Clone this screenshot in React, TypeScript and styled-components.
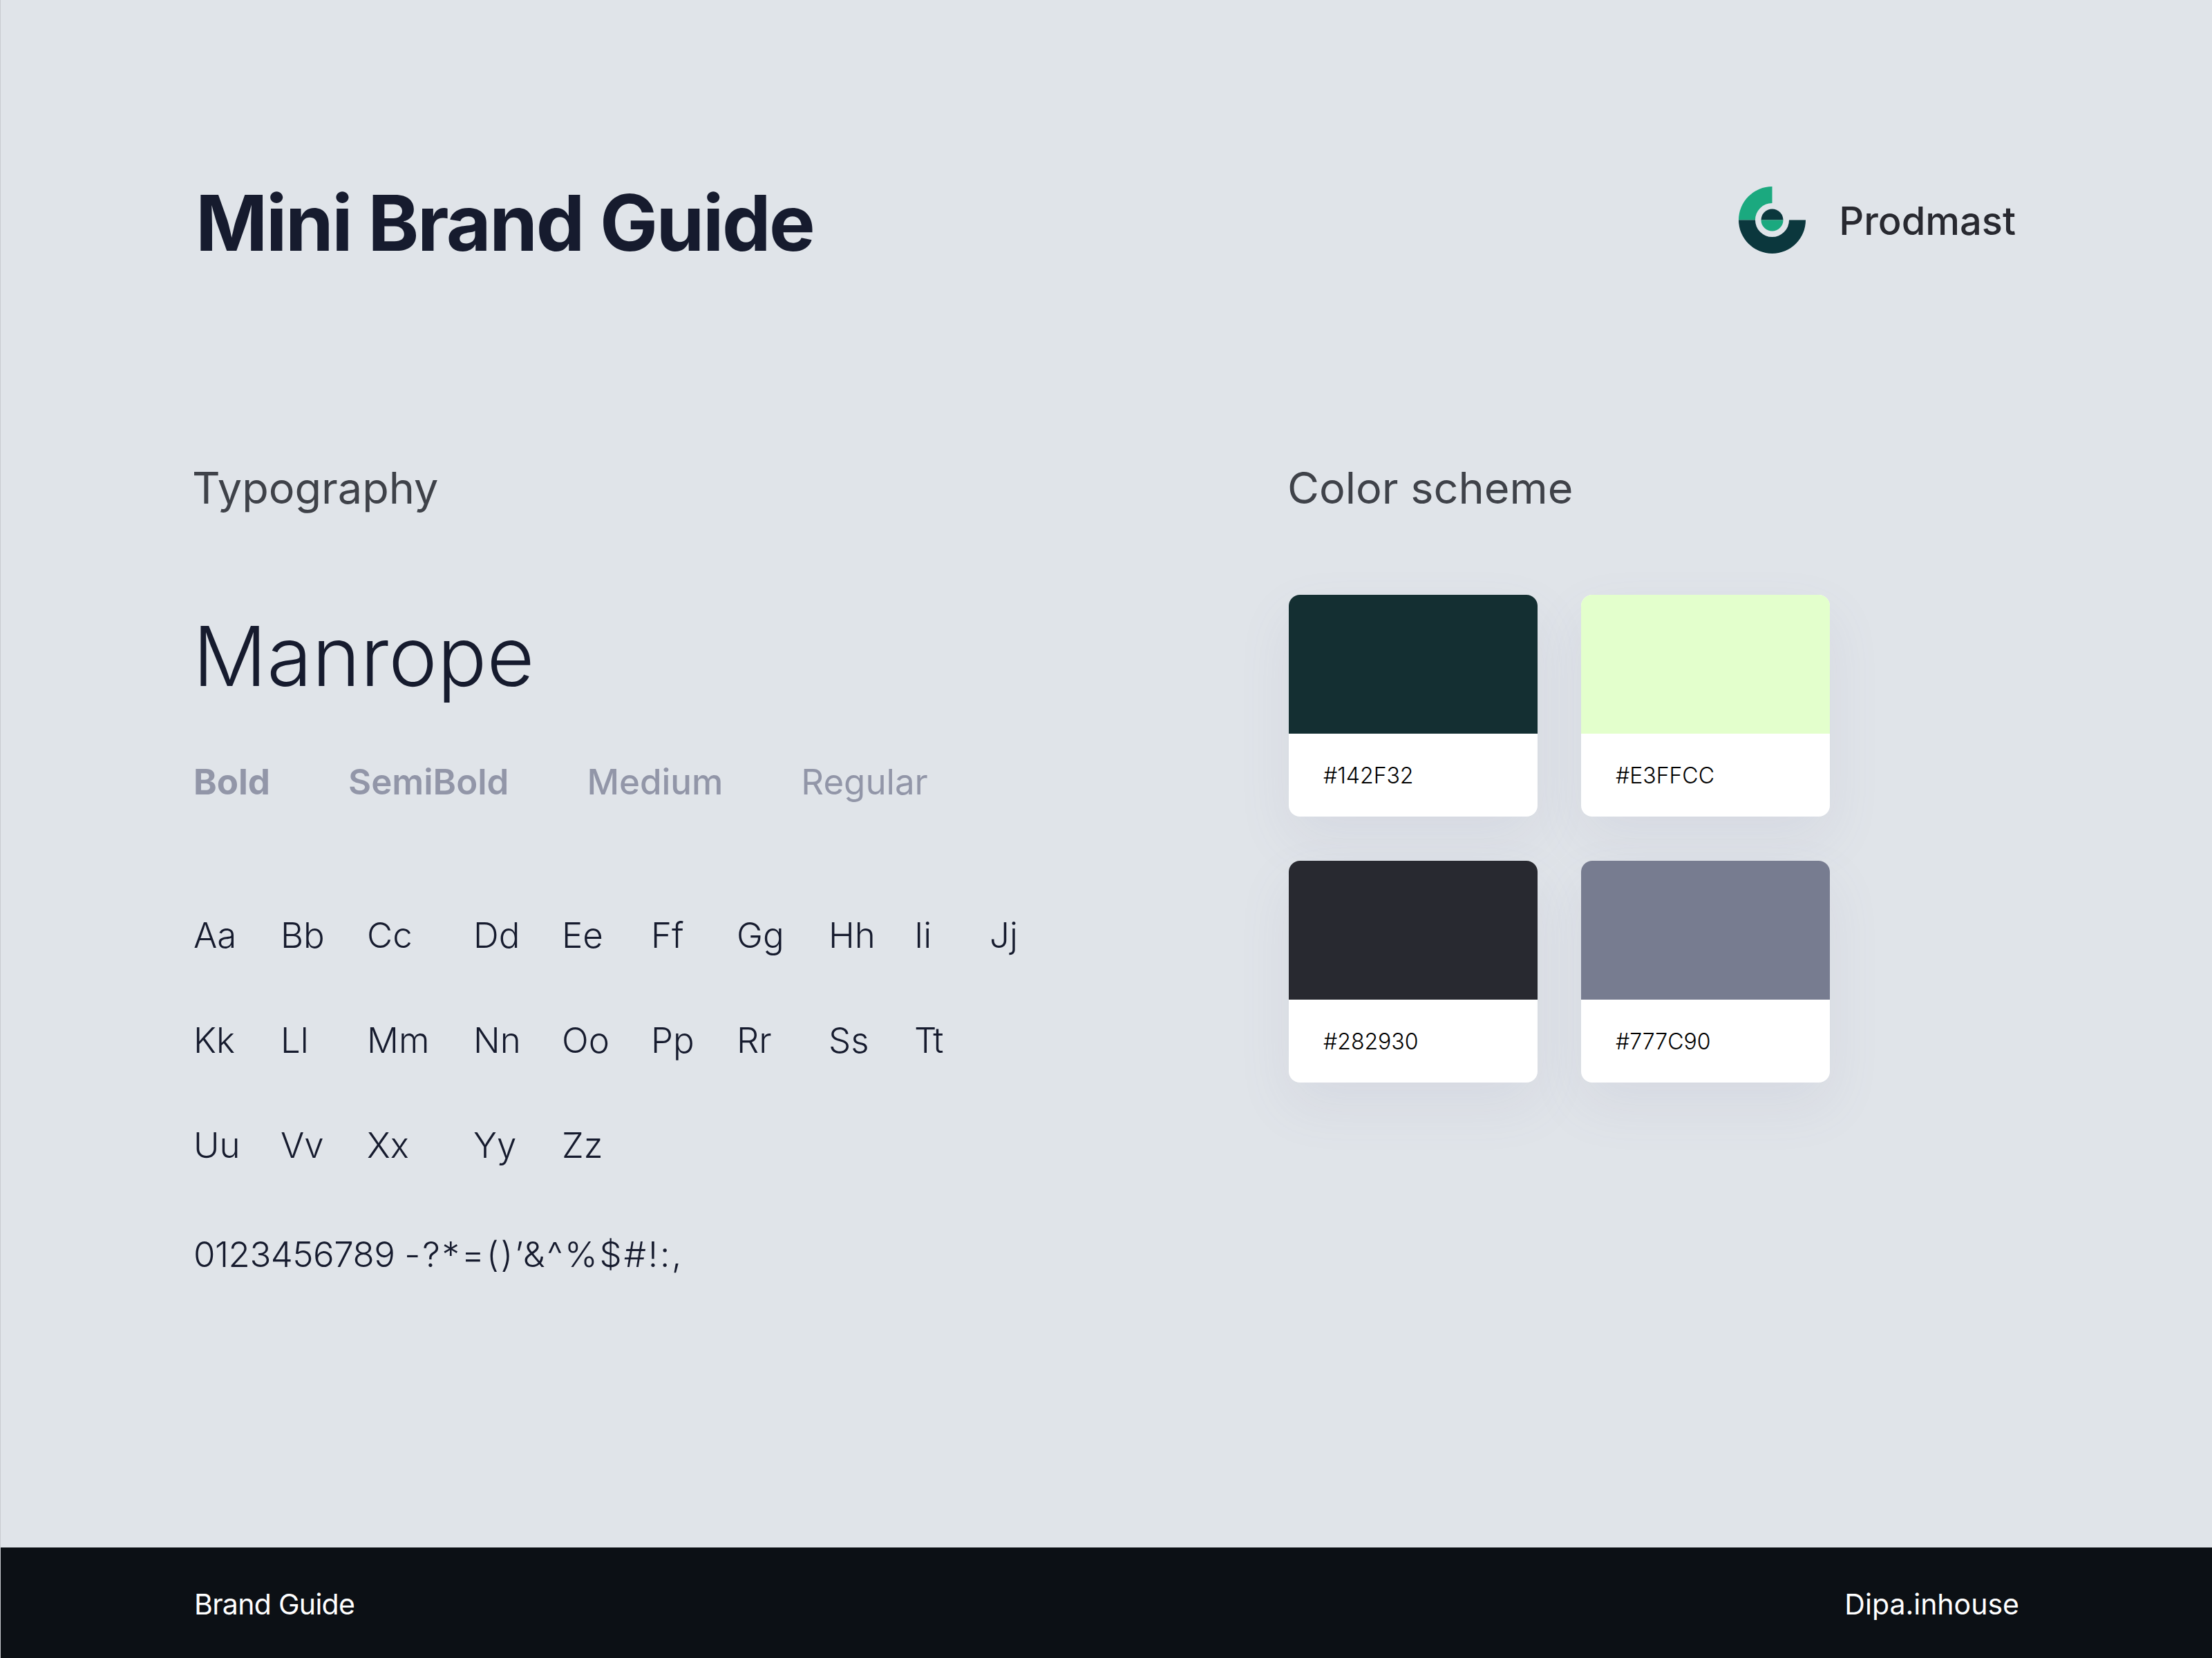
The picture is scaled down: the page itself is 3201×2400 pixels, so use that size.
import React from 'react';
import styled, { createGlobalStyle } from 'styled-components';

const GlobalStyle = createGlobalStyle`
  html, body {
    margin: 0;
    padding: 0;
    background: #e0e4e9;
  }
  * {
    box-sizing: border-box;
  }
`;

const Page = styled.div`
  width: 3201px;
  height: 2400px;
  display: flex;
  flex-direction: column;
  background: #e0e4e9;
  font-family: Inter, "Liberation Sans", sans-serif;
  overflow: hidden;
  border-left: 1px solid #c9ccd0;
`;

const Main = styled.main`
  flex: 1;
  padding: 0 284px 0 279px;
`;

const Header = styled.header`
  height: 666px;
  display: flex;
  justify-content: space-between;
  align-items: flex-start;
  padding-top: 250px;
`;

const Title = styled.h1`
  margin: 0 0 0 3px;
  font-size: 112px;
  line-height: 144px;
  font-weight: 700;
  letter-spacing: -2.4px;
  color: #161b2e;
`;

const Brand = styled.div`
  display: flex;
  align-items: center;
  gap: 48px;
  margin-top: 18px;
`;

const BrandName = styled.span`
  padding-top: 4px;
  font-size: 56px;
  line-height: 97px;
  font-weight: 500;
  color: #282930;
`;

const Columns = styled.div`
  display: flex;
`;

const TypeColumn = styled.section`
  width: 1585px;
`;

const SectionTitle = styled.h2`
  margin: 0 0 0 -2px;
  font-size: 63px;
  line-height: 80px;
  font-weight: 400;
  color: #3f4249;
`;

const FontName = styled.div`
  margin: 129px 0 0 -1px;
  font-size: 119px;
  line-height: 150px;
  font-weight: 300;
  color: #161b2e;
`;

const Weights = styled.div`
  display: flex;
  gap: 113px;
  margin: 75px 0 0 0;
`;

const WeightLabel = styled.span<{ $weight: number }>`
  font-size: 51px;
  line-height: 64px;
  font-weight: ${(p) => p.$weight};
  color: #9296a8;
`;

const Glyphs = styled.div`
  display: grid;
  grid-template-columns: 126px 125px 154px 128px 129px 124px 133px 124px 109px auto;
  grid-auto-rows: 152px;
  width: max-content;
  margin: 159px 0 0 0;
`;

const Glyph = styled.span`
  font-size: 51px;
  line-height: 62px;
  font-weight: 300;
  color: #161b2e;
`;

const Symbols = styled.div`
  margin: 6px 0 0 0;
  font-size: 51px;
  line-height: 62px;
  font-weight: 300;
  color: #161b2e;
`;

const Digits = styled.span`
  letter-spacing: -0.5px;
`;

const Marks = styled.span`
  letter-spacing: 2.8px;
`;

const Swatches = styled.div`
  display: grid;
  grid-template-columns: repeat(2, 360px);
  gap: 64px 63px;
  margin-top: 115px;
`;

const Card = styled.div`
  height: 321px;
  display: flex;
  flex-direction: column;
  background: #fff;
  border-radius: 16px;
  overflow: hidden;
  box-shadow: 0 32px 80px rgba(110, 116, 150, 0.09);
`;

const Swatch = styled.div<{ $color: string }>`
  height: 201px;
  background: ${(p) => p.$color};
`;

const Hex = styled.div`
  flex: 1;
  display: flex;
  align-items: center;
  padding-left: 50px;
  font-size: 32px;
  font-weight: 300;
  color: #000;
`;

const Footer = styled.footer`
  height: 160px;
  display: flex;
  justify-content: space-between;
  align-items: center;
  padding: 4px 279px 0 280px;
  background: #0c1015;
`;

const FooterText = styled.span<{ $tight?: boolean }>`
  font-size: 41px;
  font-weight: 400;
  letter-spacing: ${(p) => (p.$tight ? '-0.7px' : '0')};
  color: #fff;
`;

const Logo = () => (
  <svg width="97" height="97" viewBox="0 0 97 97">
    <path d="M0 48.5A48.5 48.5 0 0 1 48.5 0V24A24.5 24.5 0 0 0 24 48.5Z" fill="#1ba97f" />
    <path d="M0 48.5H24A24.5 24.5 0 0 0 73 48.5H97A48.5 48.5 0 0 1 0 48.5Z" fill="#0b373d" />
    <path d="M32.5 48.5A16 16 0 0 1 64.5 48.5Z" fill="#0b373d" />
    <path d="M32.5 48.5A16 16 0 0 0 64.5 48.5Z" fill="#1ba97f" />
  </svg>
);

const glyphs = [
  'Aa', 'Bb', 'Cc', 'Dd', 'Ee', 'Ff', 'Gg', 'Hh', 'Ii', 'Jj',
  'Kk', 'Ll', 'Mm', 'Nn', 'Oo', 'Pp', 'Rr', 'Ss', 'Tt', '',
  'Uu', 'Vv', 'Xx', 'Yy', 'Zz',
];

const weights: [string, number][] = [
  ['Bold', 700],
  ['SemiBold', 600],
  ['Medium', 500],
  ['Regular', 400],
];

const colors = ['#142F32', '#E3FFCC', '#282930', '#777C90'];

export default function App() {
  return (
    <Page>
      <GlobalStyle />
      <Main>
        <Header>
          <Title>Mini Brand Guide</Title>
          <Brand>
            <Logo />
            <BrandName>Prodmast</BrandName>
          </Brand>
        </Header>
        <Columns>
          <TypeColumn>
            <SectionTitle>Typography</SectionTitle>
            <FontName>Manrope</FontName>
            <Weights>
              {weights.map(([name, weight]) => (
                <WeightLabel key={name} $weight={weight}>{name}</WeightLabel>
              ))}
            </Weights>
            <Glyphs>
              {glyphs.map((g, i) => (
                <Glyph key={i}>{g}</Glyph>
              ))}
            </Glyphs>
            <Symbols>
              <Digits>0123456789 </Digits>
              <Marks>-?*=()’&amp;^%$#!:,</Marks>
            </Symbols>
          </TypeColumn>
          <section>
            <SectionTitle>Color scheme</SectionTitle>
            <Swatches>
              {colors.map((c) => (
                <Card key={c}>
                  <Swatch $color={c} />
                  <Hex>{c}</Hex>
                </Card>
              ))}
            </Swatches>
          </section>
        </Columns>
      </Main>
      <Footer>
        <FooterText $tight>Brand Guide</FooterText>
        <FooterText>Dipa.inhouse</FooterText>
      </Footer>
    </Page>
  );
}
